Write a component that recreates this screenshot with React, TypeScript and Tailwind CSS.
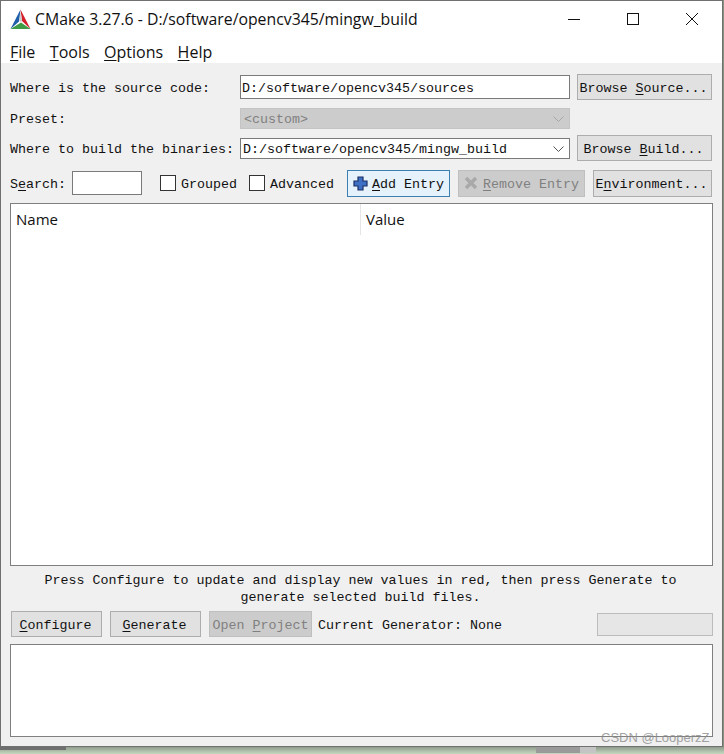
import React from "react";

const mono = "font-['Liberation_Mono',monospace] text-[13.33px] text-[#111] pt-[3px]";

function U({ children }: { children: React.ReactNode }) {
  return <span className="underline underline-offset-2">{children}</span>;
}

function Chevron({ color }: { color: string }) {
  return (
    <svg width="11" height="7" viewBox="0 0 11 7" fill="none" stroke={color} strokeWidth="1">
      <path d="M0.5 0.5 L5.5 5.5 L10.5 0.5" />
    </svg>
  );
}

function Logo() {
  return (
    <svg width="21" height="21" viewBox="0 0 21 21">
      <path d="M10.5 0.5 L0.5 20 L9 12.5 Z" fill="#1f5ea8" />
      <path d="M10.5 0.5 L20.5 20 L12 12 Z" fill="#d3202a" />
      <path d="M0.5 20 L20.5 20 L11 13.5 Z" fill="#3f9c46" />
      <path d="M10.5 2 L9.5 12 L11 13 L12 12 Z" fill="#c9c9c9" />
    </svg>
  );
}

function Btn({ className, children }: { className: string; children: React.ReactNode }) {
  return (
    <div className={`flex items-center justify-center border border-[#adadad] bg-[#e1e1e1] ${mono} ${className}`}>
      {children}
    </div>
  );
}

function Check({ label, className }: { label: string; className: string }) {
  return (
    <div className={`flex items-center ${className}`}>
      <div className="w-[16px] h-[16px] border border-[#333] bg-white" />
      <span className={`ml-[5px] ${mono}`}>{label}</span>
    </div>
  );
}

export default function App() {
  return (
    <div className="relative w-[724px] h-[754px] bg-[#84927f] overflow-hidden">
      <div className="w-[723px] h-[747px] border border-[#707070] flex flex-col bg-[#f0f0f0]">
        <div className="bg-white h-[62px] shrink-0 font-['Open_Sans',sans-serif] text-[#111]">
          <div className="h-[36px] flex items-center pl-[9px]">
            <Logo />
            <span className="ml-[4px] pt-[2px] text-[15.8px]">CMake 3.27.6 - D:/software/opencv345/mingw_build</span>
            <div className="ml-auto flex items-center">
              <svg width="14" height="14" viewBox="0 0 14 14" stroke="#111" fill="none" className="mr-[45px]"><path d="M1 7.5H13" /></svg>
              <svg width="14" height="14" viewBox="0 0 14 14" stroke="#111" fill="none" className="mr-[45px]"><rect x="1.5" y="1.5" width="11" height="11" /></svg>
              <svg width="14" height="14" viewBox="0 0 14 14" stroke="#111" fill="none" className="mr-[23px]"><path d="M1 1L13 13M13 1L1 13" /></svg>
            </div>
          </div>
          <div className="h-[26px] flex items-center pl-[9px] pt-[3px] gap-[14.5px] text-[16px]">
            <span><U>F</U>ile</span>
            <span><U>T</U>ools</span>
            <span><U>O</U>ptions</span>
            <span><U>H</U>elp</span>
          </div>
        </div>

        <div className="flex-1 pl-[8px] pr-[9px] flex flex-col">
          <div className="flex items-center h-[26px] mt-[11px] pl-[1px]">
            <span className={`w-[230px] ${mono}`}>Where is the source code:</span>
            <div className={`w-[330px] h-[24px] border border-[#7a7a7a] bg-white px-[1px] flex items-center ${mono}`}>D:/software/opencv345/sources</div>
            <Btn className="ml-[7px] w-[135px] h-[26px] pr-[2px]"><span>Browse <U>S</U>ource...</span></Btn>
          </div>

          <div className="flex items-center h-[22px] mt-[7px] pl-[1px]">
            <span className={`w-[230px] ${mono}`}>Preset:</span>
            <div className={`w-[330px] h-[21px] bg-[#cccccc] border border-[#c4c4c4] px-[3px] flex items-center justify-between pr-[5px] ${mono}`}>
              <span className="text-[#808080]">&lt;custom&gt;</span>
              <Chevron color="#a6a6a6" />
            </div>
          </div>

          <div className="flex items-center h-[26px] mt-[6px] pl-[1px]">
            <span className={`w-[230px] ${mono}`}>Where to build the binaries:</span>
            <div className={`w-[330px] h-[21px] border border-[#7a7a7a] bg-white pl-[2px] pr-[5px] flex items-center justify-between ${mono}`}>
              <span>D:/software/opencv345/mingw_build</span>
              <Chevron color="#555" />
            </div>
            <Btn className="ml-[7px] w-[135px] h-[26px] pr-[2px]"><span>Browse <U>B</U>uild...</span></Btn>
          </div>

          <div className="flex items-center h-[28px] mt-[8px] pl-[1px]">
            <span className={`w-[62px] ${mono}`}>S<U>e</U>arch:</span>
            <div className="w-[70px] h-[24px] border border-[#7a7a7a] bg-white" />
            <Check label="Grouped" className="ml-[18px]" />
            <Check label="Advanced" className="ml-[12px]" />
            <Btn className="ml-[13px] w-[103px] h-[27px] !border-[#3c7fb1] !bg-[#e5f1fb]">
              <svg width="15" height="15" viewBox="0 0 15 15" className="mr-[4px] -mt-[3px]">
                <path d="M5 1H10V5H14V10H10V14H5V10H1V5H5Z" fill="#3d6fc4" stroke="#1b2f66" strokeWidth="1.2" />
              </svg>
              <span><U>A</U>dd Entry</span>
            </Btn>
            <Btn className="ml-[8px] w-[127px] h-[27px] !bg-[#cccccc] !border-[#bfbfbf]">
              <svg width="14" height="14" viewBox="0 0 14 14" className="mr-[5px] -mt-[3px]">
                <path d="M2 2L12 12M12 2L2 12" stroke="#a9a9a9" strokeWidth="3.4" />
              </svg>
              <span className="text-[#808080]"><U>R</U>emove Entry</span>
            </Btn>
            <Btn className="ml-[8px] w-[119px] h-[27px] pr-[2px]"><span>E<U>n</U>vironment...</span></Btn>
          </div>

          <div className="mt-[6px] ml-[1px] w-[703px] h-[363px] border border-[#7f7f7f] bg-white flex flex-col">
            <div className="h-[31px] flex items-center font-['Open_Sans',sans-serif] text-[15px] text-[#111]">
              <div className="w-[350px] h-full flex items-center pl-[5px] border-r border-[#e5e5e5]">Name</div>
              <div className="pl-[5px]">Value</div>
            </div>
          </div>

          <div className={`mt-[3px] text-center leading-[17px] ${mono} w-[703px]`}>
            Press Configure to update and display new values in red, then press Generate to<br />generate selected build files.
          </div>

          <div className="flex items-center h-[26px] mt-[5px] pl-[2px]">
            <Btn className="w-[91px] h-[26px] pr-[2px]"><span><U>C</U>onfigure</span></Btn>
            <Btn className="ml-[8px] w-[91px] h-[26px] pr-[2px]"><span><U>G</U>enerate</span></Btn>
            <Btn className="ml-[8px] w-[103px] h-[26px] !bg-[#cccccc] !border-[#bfbfbf]"><span className="text-[#808080]">Open <U>P</U>roject</span></Btn>
            <span className={`ml-[6px] ${mono}`}>Current Generator: None</span>
            <div className="ml-auto w-[116px] h-[23px] border border-[#bcbcbc] bg-[#e6e6e6]" />
          </div>

          <div className="mt-[7px] ml-[1px] w-[703px] h-[93px] border border-[#7f7f7f] bg-white" />
        </div>
      </div>
      <div className="flex h-[7px] bg-gradient-to-b from-[#8f9c8c] to-[#c6d9c1]">
        <div className="w-[66px] h-[3px] bg-[#6f6f6f]" />
        <div className="ml-[470px] w-[44px] h-[6px] bg-[#9a9a9a]" />
        <div className="w-[16px] h-[6px] bg-[#c4c4c4]" />
      </div>
      <div className="absolute left-[601px] top-[728px] font-['Liberation_Sans',sans-serif] text-[13px] text-[#8a8a8a]/80">CSDN @LooperzZ</div>
    </div>
  );
}
